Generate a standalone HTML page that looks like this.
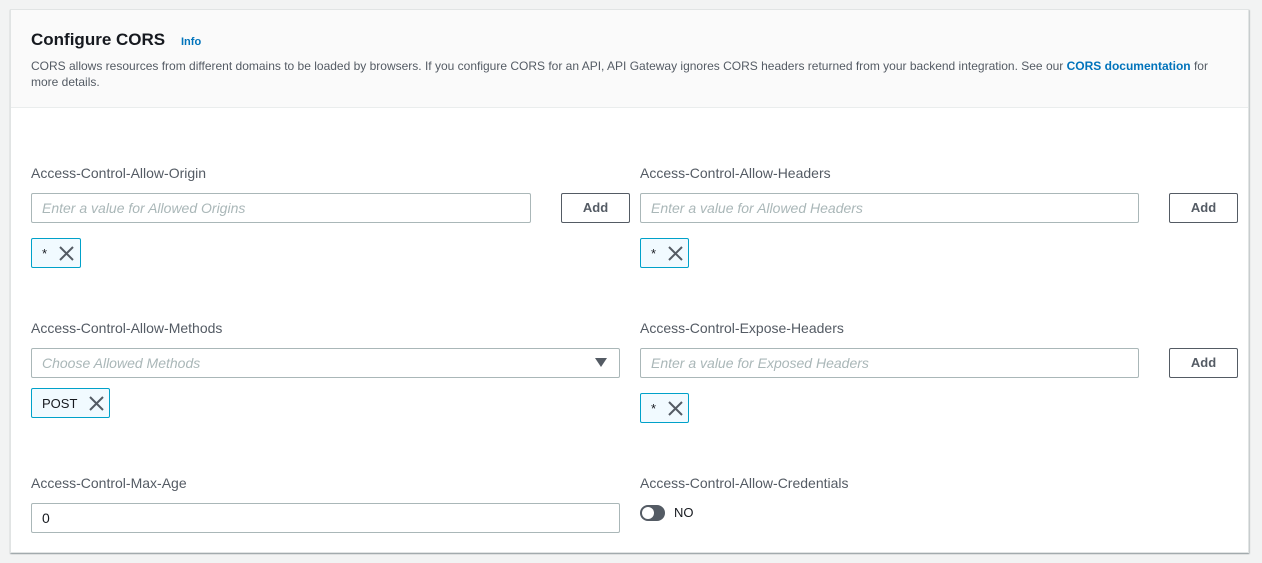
<!DOCTYPE html>
<html><head><meta charset="utf-8"><style>
*{box-sizing:border-box;margin:0;padding:0}
body{width:1262px;height:563px;background:#f2f3f3;font-family:"Liberation Sans",sans-serif;position:relative;overflow:hidden;color:#16191f}
.card{position:absolute;left:10px;top:9px;width:1239px;height:544px;background:#fff;border:1px solid #e1e4e4;box-shadow:0 1px 1px rgba(0,28,36,.3),1px 1px 1px rgba(0,28,36,.15)}
.hd{position:absolute;left:0;top:0;right:0;height:98px;background:#fafafa;border-bottom:1px solid #eaeded}
.a{position:absolute}
h1{position:absolute;left:20px;top:20px;font-size:17px;font-weight:bold;color:#16191f}
.info{position:absolute;left:170px;top:26px;font-size:11px;font-weight:bold;color:#0073bb}
.desc{position:absolute;left:20px;top:48px;width:1195px;font-size:12px;line-height:16px;color:#545b64}
.desc b{color:#0073bb}
.lbl{position:absolute;font-size:14px;color:#545b64}
.in{position:absolute;height:30px;border:1px solid #aab7b8;border-radius:2px;font-size:14px;font-style:italic;color:#aab7b8;padding:6px 10px;background:#fff}
.btn{position:absolute;width:69px;height:30px;border:1px solid #545b64;border-radius:2px;font-size:13px;font-weight:bold;color:#545b64;text-align:center;line-height:28px;background:#fff}
.tok{position:absolute;height:30px;border:1px solid #00a1c9;border-radius:2px;background:#f1faff;font-size:13px;color:#16191f;padding:0 10px;line-height:29px}
.tok svg{position:absolute;top:7px}
</style></head><body>
<div class="card">
<div class="hd"></div>
<h1>Configure CORS</h1>
<div class="info">Info</div>
<div class="desc">CORS allows resources from different domains to be loaded by browsers. If you configure CORS for an API, API Gateway ignores CORS headers returned from your backend integration. See our <b>CORS documentation</b> for more details.</div>
</div>
<div class="lbl" style="left:31px;top:165px">Access-Control-Allow-Origin</div>
<div class="in" style="left:31px;top:193px;width:500px">Enter a value for Allowed Origins</div>
<div class="btn" style="left:561px;top:193px">Add</div>
<div class="tok" style="left:31px;top:238px;width:50px">*<svg style="left:27px" width="15" height="15" viewBox="0 0 15 15"><path d="M1 1L14 14M14 1L1 14" stroke="#545b64" stroke-width="2"/></svg></div>

<div class="lbl" style="left:640px;top:165px">Access-Control-Allow-Headers</div>
<div class="in" style="left:640px;top:193px;width:499px">Enter a value for Allowed Headers</div>
<div class="btn" style="left:1169px;top:193px">Add</div>
<div class="tok" style="left:640px;top:238px;width:49px">*<svg style="left:27px" width="15" height="15" viewBox="0 0 15 15"><path d="M1 1L14 14M14 1L1 14" stroke="#545b64" stroke-width="2"/></svg></div>

<div class="lbl" style="left:31px;top:320px">Access-Control-Allow-Methods</div>
<div class="in" style="left:31px;top:348px;width:589px">Choose Allowed Methods</div>
<svg class="a" style="left:595px;top:358px" width="12" height="9" viewBox="0 0 12 9"><path d="M0 0H12L6 9Z" fill="#545b64"/></svg>
<div class="tok" style="left:31px;top:388px;width:79px">POST<svg style="left:57px" width="15" height="15" viewBox="0 0 15 15"><path d="M1 1L14 14M14 1L1 14" stroke="#545b64" stroke-width="2"/></svg></div>

<div class="lbl" style="left:640px;top:320px">Access-Control-Expose-Headers</div>
<div class="in" style="left:640px;top:348px;width:499px">Enter a value for Exposed Headers</div>
<div class="btn" style="left:1169px;top:348px">Add</div>
<div class="tok" style="left:640px;top:393px;width:49px">*<svg style="left:27px" width="15" height="15" viewBox="0 0 15 15"><path d="M1 1L14 14M14 1L1 14" stroke="#545b64" stroke-width="2"/></svg></div>

<div class="lbl" style="left:31px;top:475px">Access-Control-Max-Age</div>
<div class="in" style="left:31px;top:503px;width:589px;font-style:normal;color:#16191f">0</div>

<div class="lbl" style="left:640px;top:475px">Access-Control-Allow-Credentials</div>
<div class="a" style="left:640px;top:505px;width:25px;height:16px;border-radius:8px;background:#545b64"><div style="position:absolute;left:2px;top:2px;width:12px;height:12px;border-radius:50%;background:#fff"></div></div>
<div class="a" style="left:674px;top:505px;font-size:13px;color:#16191f">NO</div>
</body></html>
